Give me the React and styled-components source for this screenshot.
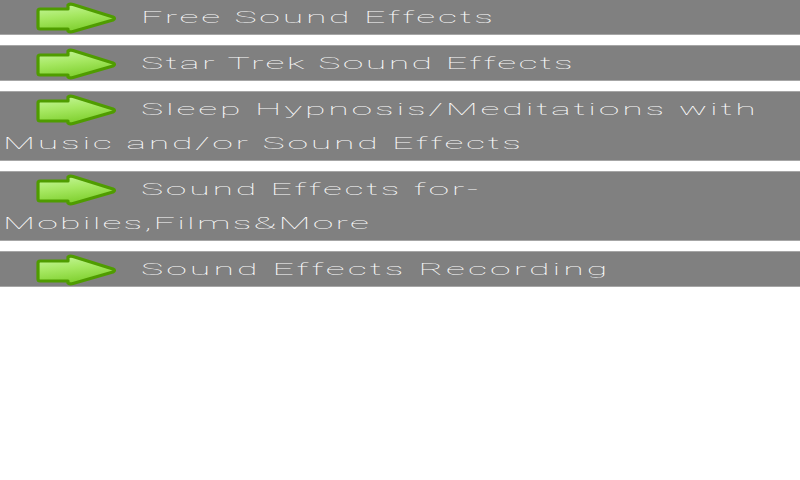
import React from "react";
import styled, { createGlobalStyle } from "styled-components";

const Global = createGlobalStyle`
  html, body {
    margin: 0;
    padding: 0;
    background: #ffffff;
    width: 800px;
    height: 480px;
    overflow: hidden;
  }
  #root {
    width: 800px;
  }
`;

const List = styled.div`
  display: flex;
  flex-direction: column;
  gap: 10px;
  margin-top: -1px;
`;

const Row = styled.a`
  display: block;
  background: #808080;
  border-top: 1px solid #a6a6a6;
  border-bottom: 1px solid #a6a6a6;
  overflow: hidden;
  text-decoration: none;
  cursor: pointer;
`;

const FirstLine = styled.div`
  display: flex;
  align-items: center;
  height: 34px;
`;

const ArrowIcon = styled.svg`
  flex: none;
  width: 82px;
  height: 32px;
  margin-left: 36px;
  margin-top: 1px;
`;

/* Android-style widened label: glyphs stretched horizontally */
const Label = styled.span`
  display: block;
  white-space: nowrap;
  color: #fbfbfb;
  font-family: Roboto, "Liberation Sans", sans-serif;
  font-weight: 100;
  font-size: 17px;
  line-height: 34px;
  letter-spacing: ${(p) => p.$spacing ?? 1.25}px;
  transform: scaleX(2.2);
  transform-origin: left center;
  margin-left: ${(p) => p.$indent}px;
`;

const WrapLine = styled.div`
  height: 34px;
`;

function Arrow() {
  return (
    <ArrowIcon viewBox="0 0 82 32">
      <defs>
        <linearGradient id="arrowFill" x1="0" y1="0" x2="0.3" y2="1">
          <stop offset="0" stopColor="#c8f7a0" />
          <stop offset="0.5" stopColor="#a6e862" />
          <stop offset="1" stopColor="#80d030" />
        </linearGradient>
      </defs>
      <path
        d="M4 7 H32 V3 Q34 1.5 37 2.5 L77 15 Q80 16.5 77 18 L37 29.5 Q34 30.5 32 29 V27 H4 Q2 27 2 25 V9 Q2 7 4 7 Z"
        fill="url(#arrowFill)"
        stroke="#4f9c00"
        strokeWidth="3.2"
        strokeLinejoin="round"
      />
    </ArrowIcon>
  );
}

const items = [
  { lines: [{ text: "Free Sound Effects" }] },
  { lines: [{ text: "Star Trek Sound Effects", spacing: 1.1 }] },
  {
    lines: [
      { text: "Sleep Hypnosis/Meditations with", spacing: 1.3 },
      { text: "Music and/or Sound Effects" },
    ],
  },
  {
    lines: [
      { text: "Sound Effects for-" },
      { text: "Mobiles,Films&More", spacing: 1.0 },
    ],
  },
  { lines: [{ text: "Sound Effects Recording", spacing: 1.4 }] },
];

export default function App() {
  return (
    <>
      <Global />
      <List>
        {items.map((item, i) => {
          const [first, ...rest] = item.lines;
          return (
            <Row key={i}>
              <FirstLine>
                <Arrow />
                <Label $indent={23} $spacing={first.spacing}>
                  {first.text}
                </Label>
              </FirstLine>
              {rest.map((line, j) => (
                <WrapLine key={j}>
                  <Label $indent={3} $spacing={line.spacing}>
                    {line.text}
                  </Label>
                </WrapLine>
              ))}
            </Row>
          );
        })}
      </List>
    </>
  );
}
